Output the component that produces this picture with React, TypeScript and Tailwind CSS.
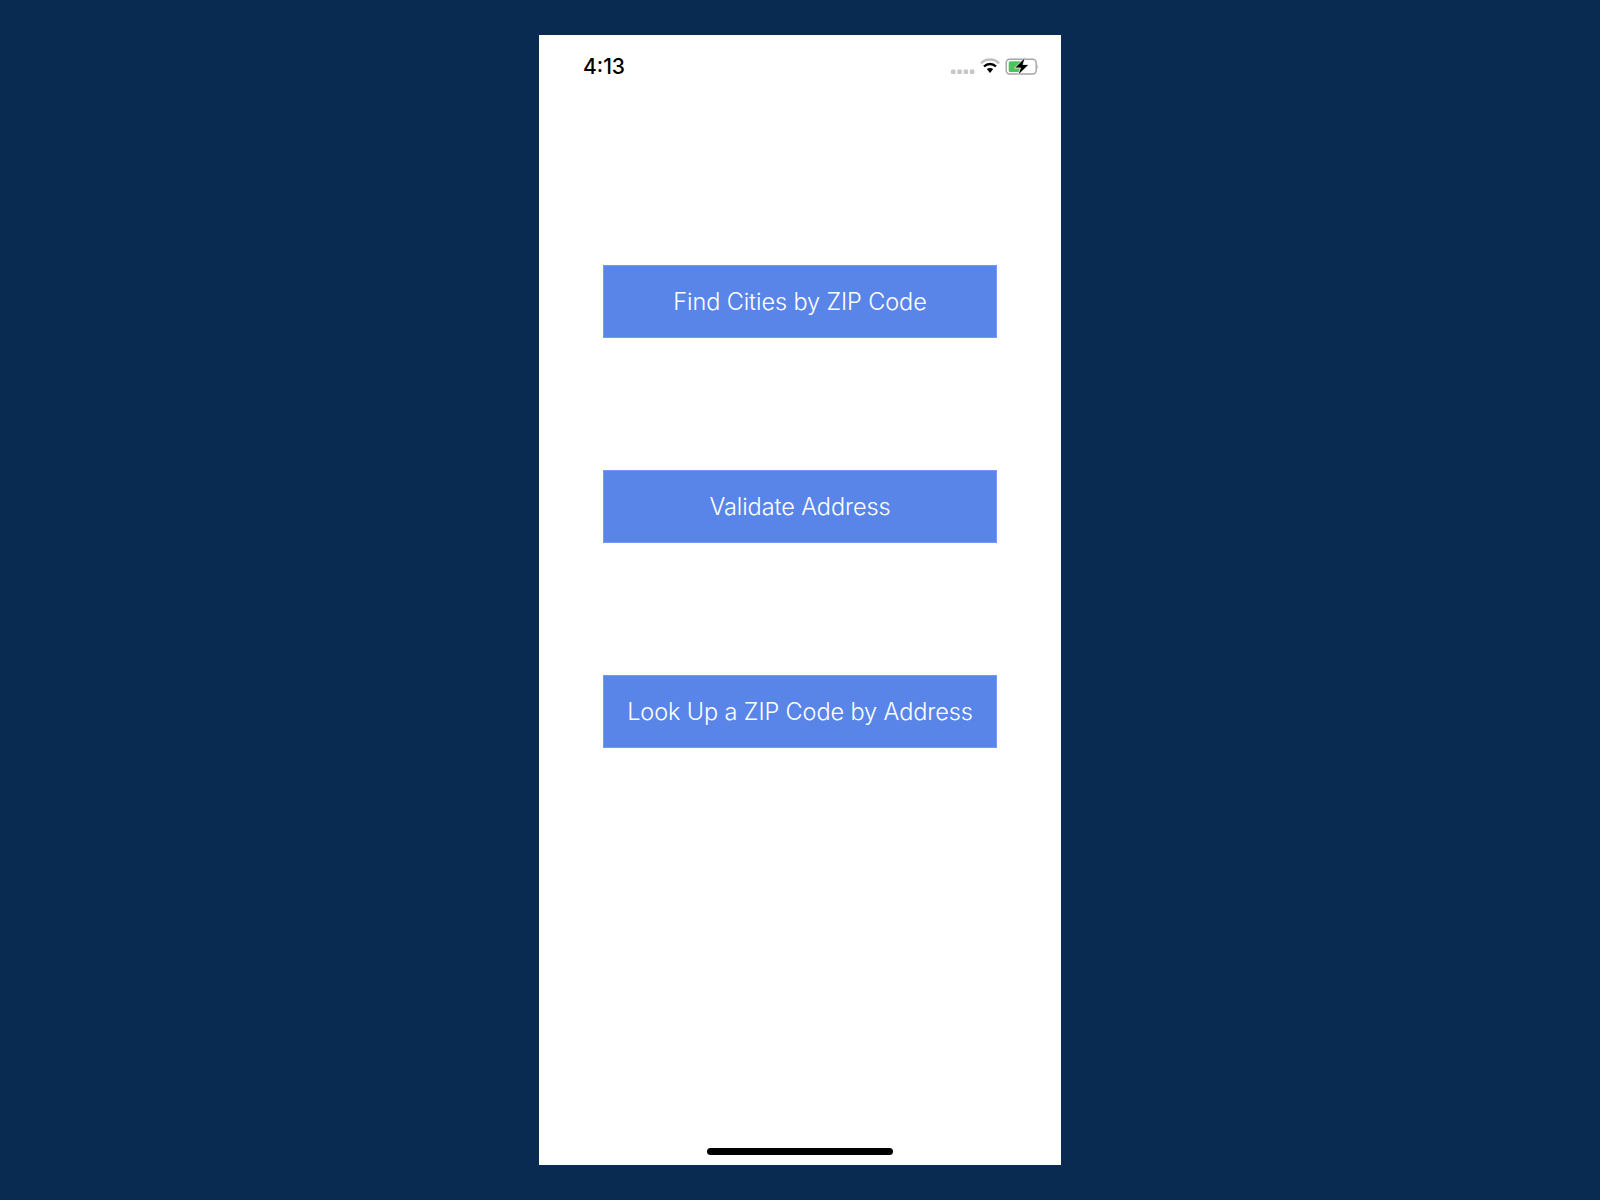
const buttons = ['Find Cities by ZIP Code', 'Validate Address', 'Look Up a ZIP Code by Address'];

function StatusIcons() {
  return (
    <svg width="90" height="20" viewBox="0 0 90 20" className="block">
      <g fill="#c6c6c6">
        <rect x="2" y="12.5" width="4.5" height="4.5" rx="1" />
        <rect x="8.3" y="12.5" width="4.5" height="4.5" rx="1" />
        <rect x="14.6" y="12.5" width="4.5" height="4.5" rx="1" />
        <rect x="20.9" y="12.5" width="4.5" height="4.5" rx="1" />
      </g>
      <path d="M32 6.3 C36.8 1.3 45.2 1.3 50 6.3" fill="none" stroke="#bdbdbd" strokeWidth="2.4" />
      <path d="M35 9.5 C38.5 6.1 43.5 6.1 47 9.5" fill="none" stroke="#000" strokeWidth="2.4" />
      <path d="M37.8 12.1 C39.6 10.5 42.4 10.5 44.2 12.1 L41 16.1 Z" fill="#000" />
      <rect x="57.2" y="2.2" width="30" height="14.8" rx="3.5" fill="none" stroke="#a3a3a3" strokeWidth="1.4" />
      <rect x="59.7" y="4.2" width="12.8" height="10.8" rx="1.5" fill="#4cc35c" />
      <path d="M88.5 7.4 C89.2 8.2 89.2 11 88.5 11.8 Z" fill="#8f8f8f" />
      <path d="M76.5 0 L65.5 11 L71.5 11 L68.5 18.8 L80 7.5 L74 7.5 Z" fill="#000" stroke="#fff" strokeWidth="0.8" />
    </svg>
  );
}

export default function App() {
  return (
    <div className="flex min-h-[1200px] justify-center bg-[#092a51] pt-[35px] font-['Inter',sans-serif]">
      <div className="flex h-[1130px] w-[522px] flex-col bg-white">
        <div className="flex h-[63px] items-center justify-between pl-[44px] pr-[22px]">
          <span className="text-[21px] font-medium leading-none text-black">4:13</span>
          <StatusIcons />
        </div>
        <div className="flex flex-col gap-[131.5px] pl-[64px] pt-[166.5px]">
          {buttons.map((label) => (
            <button
              key={label}
              type="button"
              className="h-[73.5px] w-[394px] border border-[#7299f3] bg-[#5985e9] pt-px text-[23.5px] font-light tracking-[-0.1px] text-white"
            >
              {label}
            </button>
          ))}
        </div>
        <div className="mt-auto flex justify-center pb-[10px]">
          <div className="h-[7px] w-[186px] rounded-full bg-black" />
        </div>
      </div>
    </div>
  );
}
